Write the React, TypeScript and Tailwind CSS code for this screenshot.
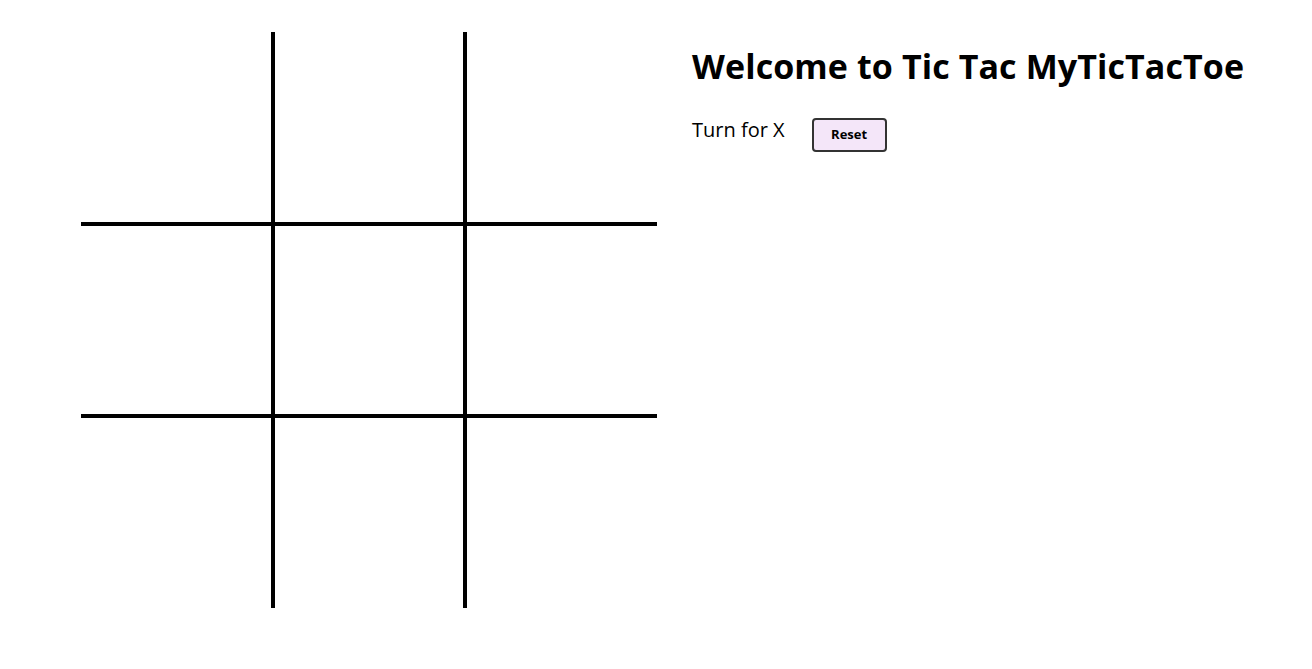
import React, { useState } from 'react';

// Tic tac toe board + status panel

type Cell = 'X' | 'O' | null;

const colSizes = ['w-[190px]', 'w-[188px]', 'w-[190px]'];
const rowSizes = ['h-[190px]', 'h-[188px]', 'h-[190px]'];

export default function App() {
  const [cells, setCells] = useState<Cell[]>(Array(9).fill(null));
  const [turn, setTurn] = useState<'X' | 'O'>('X');

  const play = (i: number) => {
    if (cells[i]) return;
    const next = cells.slice();
    next[i] = turn;
    setCells(next);
    setTurn(turn === 'X' ? 'O' : 'X');
  };

  const reset = () => {
    setCells(Array(9).fill(null));
    setTurn('X');
  };

  return (
    <div
      className="flex min-h-screen bg-white text-black"
      style={{ fontFamily: '"Open Sans", "Noto Sans", sans-serif' }}
    >
      {/* Board */}
      <div className="ml-[81px] mt-[32px] grid grid-cols-[190px_188px_190px] grid-rows-[190px_188px_190px] gap-[4px] bg-black self-start">
        {cells.map((c, i) => (
          <button
            key={i}
            onClick={() => play(i)}
            className={`${colSizes[i % 3]} ${rowSizes[Math.floor(i / 3)]} bg-white flex items-center justify-center text-7xl font-bold`}
          >
            {c}
          </button>
        ))}
      </div>

      {/* Info panel */}
      <div className="ml-[35px] pt-[43px] flex flex-col">
        <h1 className="text-[34px] leading-[46px] font-bold tracking-[0.1px] whitespace-nowrap">
          Welcome to Tic Tac MyTicTacToe
        </h1>
        <div className="mt-[27px] flex items-start gap-[27px]">
          <span className="text-[20px] leading-[28px]">Turn for {turn}</span>
          <button
            onClick={reset}
            className="mt-[2px] w-[75px] h-[34px] rounded-[4px] border-2 border-[#333333] bg-[#f4e6f9] text-[13px] font-bold"
          >
            Reset
          </button>
        </div>
      </div>
    </div>
  );
}
